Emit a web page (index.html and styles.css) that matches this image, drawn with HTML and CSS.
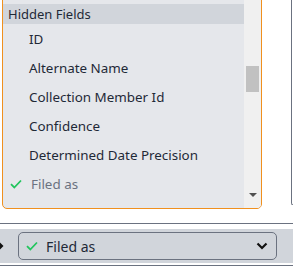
FILE: index.html
```html
<!doctype html>
<html lang="en">
  <head>
    <meta charset="UTF-8" />
    <title>Field picker</title>
    <link rel="stylesheet" href="styles.css">
  </head>
  <body>
    <div class="top">
      <div class="listbox">
        <div class="options">
          <div class="group">Hidden Fields</div>
          <div class="option">ID</div>
          <div class="option">Alternate Name</div>
          <div class="option">Collection Member Id</div>
          <div class="option">Confidence</div>
          <div class="option">Determined Date Precision</div>
          <div class="option selected">
            <svg class="check" viewBox="0 0 12 10" width="12" height="10"><path d="M1 5.2 L4.3 8.5 L11 1.5" /></svg>
            Filed as
          </div>
        </div>
        <div class="scrollbar">
          <div class="thumb"></div>
          <div class="down"></div>
        </div>
      </div>
      <div class="side"></div>
    </div>

    <div class="rule"></div>
    <div class="bar">
      <svg class="tip" viewBox="0 0 8 10" width="8" height="10"><path d="M0 1.5 L4 1.5 L7.5 5 L4 8.5 L0 8.5 Z" /></svg>
      <div class="select">
        <svg class="check" viewBox="0 0 12 10" width="12" height="10"><path d="M1 5.2 L4.3 8.5 L11 1.5" /></svg>
        <span class="value">Filed as</span>
        <svg class="chevron" viewBox="0 0 12 8" width="12" height="8"><path d="M1.5 1.5 L6 6 L10.5 1.5" /></svg>
      </div>
    </div>
    <div class="rule"></div>
  </body>
</html>
```

FILE: styles.css
```css
* {
  margin: 0;
  padding: 0;
  box-sizing: border-box;
  font-family: 'Noto Sans', sans-serif;
}

body {
  background-color: white;
  width: 293px;
  height: 271px;
  overflow: hidden;
  font-size: 13px;
  color: #1f2937;
}

.top {
  display: flex;
  align-items: flex-start;
  height: 209px;
}

.listbox {
  display: flex;
  width: 260px;
  height: 215px;
  margin-top: -6px;
  margin-left: 2px;
  border: 1px solid #f0901e;
  border-radius: 0 0 5px 5px;
  overflow: hidden;
  background-color: #e5e7eb;
}

.options {
  flex: 1;
  padding-top: 9px;
}

.group {
  height: 20px;
  line-height: 20px;
  padding-left: 5px;
  background-color: #d1d5db;
  color: #1f2937;
}

.option {
  display: flex;
  align-items: center;
  height: 29px;
  padding-left: 26px;
  font-size: 13.4px;
  color: #1f2937;
}

.option.selected {
  padding-left: 7px;
  gap: 9px;
  color: #6b7280;
}

.check {
  fill: none;
  stroke: #22c55e;
  stroke-width: 1.8;
}

.scrollbar {
  position: relative;
  width: 17px;
  background-color: #f0f0f0;
}

.thumb {
  position: absolute;
  left: 2px;
  top: 71px;
  width: 13px;
  height: 26px;
  background-color: #c1c1c1;
}

.down {
  position: absolute;
  left: 5px;
  bottom: 11px;
  width: 0;
  height: 0;
  border-left: 4px solid transparent;
  border-right: 4px solid transparent;
  border-top: 4px solid #505050;
}

.side {
  margin-left: 29px;
  flex: 1;
  height: 205px;
  border-left: 1px solid #6b7280;
  border-bottom: 1px solid #6b7280;
  border-bottom-left-radius: 5px;
}

.rule {
  height: 1px;
  margin-top: 14px;
  background-color: #6b7280;
}

.bar {
  display: flex;
  align-items: center;
  height: 34px;
  margin-top: 5px;
  background-color: #d1d5db;
}

.bar + .rule {
  margin-top: 2px;
}

.tip {
  margin-left: -4px;
  fill: #111;
}

.select {
  display: flex;
  align-items: center;
  width: 259px;
  height: 28px;
  margin-left: 14px;
  padding: 0 8px 0 7px;
  border: 1px solid #6b7280;
  border-radius: 5px;
  gap: 8px;
}

.value {
  flex: 1;
  font-size: 14px;
  color: #1f2937;
}

.chevron {
  fill: none;
  stroke: #111;
  stroke-width: 2.2;
}
```
